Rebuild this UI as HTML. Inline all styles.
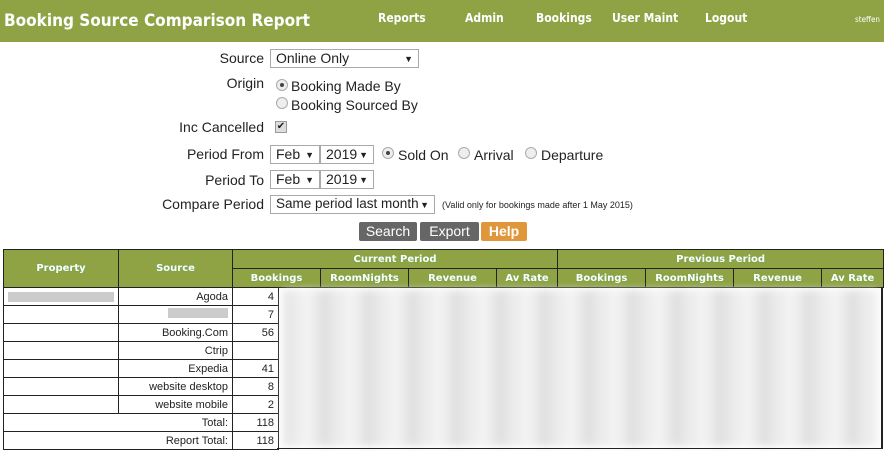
<!DOCTYPE html>
<html><head><style>
*{margin:0;padding:0;box-sizing:border-box}
body{width:884px;height:451px;background:#fff;font-family:"Liberation Sans",Arial,sans-serif;position:relative;overflow:hidden;color:#222}
.hdr{position:absolute;left:0;top:0;width:884px;height:42px;background:#8fa345}
.hdr div{position:absolute;color:#fff;font-family:"DejaVu Sans Condensed","DejaVu Sans",sans-serif;font-weight:bold}
.lbl{position:absolute;right:620px;font-size:14px;white-space:nowrap}
.a{position:absolute;font-size:14px;white-space:nowrap}
.sel{position:absolute;border:1px solid #a9a9a9;background:#fff;font-size:14px;padding-left:5px;line-height:16px;height:19px;white-space:nowrap}
.sel:after{content:"▼";position:absolute;right:5px;top:1px;font-size:9px}
.rad{position:absolute;width:12px;height:12px;border-radius:50%;border:1px solid #aaa;background:#eee}
.rad.on:after{content:"";position:absolute;left:3px;top:3px;width:4px;height:4px;border-radius:50%;background:#444}
.btn{position:absolute;top:222px;height:19px;color:#fff;font-size:14px;text-align:center;line-height:19px;border-radius:2px}
table{position:absolute;border-collapse:collapse;font-size:11px;table-layout:fixed}
td,th{border:1px solid #222;height:18px;padding:0 4px}
th{background:#8fa345;color:#fff;font-family:"DejaVu Sans",sans-serif;font-size:10px;text-shadow:0 0 1px #4a6;height:19px}
td{text-align:right}
</style></head><body>
<div class="hdr">
<div style="left:4px;top:11px;font-size:17px">Booking Source Comparison Report</div>
<div style="left:378px;top:11px;font-size:12px">Reports</div>
<div style="left:465px;top:11px;font-size:12px">Admin</div>
<div style="left:536px;top:11px;font-size:12px">Bookings</div>
<div style="left:612px;top:11px;font-size:12px">User Maint</div>
<div style="left:705px;top:11px;font-size:12px">Logout</div>
<div style="left:855px;top:15px;font-size:8px;font-weight:normal">steffen</div>
</div>
<div class="lbl" style="top:50px">Source</div>
<div class="sel" style="left:270px;top:49px;width:149px">Online Only</div>
<div class="lbl" style="top:75px">Origin</div>
<div class="rad on" style="left:276px;top:79px"></div><div class="a" style="left:291px;top:78px">Booking Made By</div>
<div class="rad" style="left:276px;top:97px"></div><div class="a" style="left:291px;top:97px">Booking Sourced By</div>
<div class="lbl" style="top:119px">Inc Cancelled</div>
<div style="position:absolute;left:275px;top:121px;width:12px;height:12px;border:1px solid #999;background:#ddd;font-size:10px;line-height:10px;text-align:center">✔</div>
<div class="lbl" style="top:146px">Period From</div>
<div class="sel" style="left:270px;top:145px;width:50px">Feb</div>
<div class="sel" style="left:320px;top:145px;width:54px">2019</div>
<div class="rad on" style="left:382px;top:147px"></div><div class="a" style="left:398px;top:147px">Sold On</div>
<div class="rad" style="left:458px;top:147px"></div><div class="a" style="left:474px;top:147px">Arrival</div>
<div class="rad" style="left:525px;top:147px"></div><div class="a" style="left:541px;top:147px">Departure</div>
<div class="lbl" style="top:172px">Period To</div>
<div class="sel" style="left:270px;top:170px;width:50px">Feb</div>
<div class="sel" style="left:320px;top:170px;width:54px">2019</div>
<div class="lbl" style="top:196px">Compare Period</div>
<div class="sel" style="left:270px;top:195px;width:165px;font-size:13.5px">Same period last month</div>
<div class="a" style="left:442px;top:200px;font-size:9px">(Valid only for bookings made after 1 May 2015)</div>
<div class="btn" style="left:359px;width:58px;background:#666">Search</div>
<div class="btn" style="left:420px;width:59px;background:#666">Export</div>
<div class="btn" style="left:481px;width:46px;background:#e0963a;font-weight:bold">Help</div>
<table style="left:3px;top:249px;width:880px">
<colgroup><col style="width:115px"><col style="width:114px"><col style="width:88px"><col style="width:88px"><col style="width:88px"><col style="width:61px"><col style="width:88px"><col style="width:88px"><col style="width:88px"><col style="width:62px"></colgroup>
<tr><th rowspan="2">Property</th><th rowspan="2">Source</th><th colspan="4">Current Period</th><th colspan="4">Previous Period</th></tr>
<tr><th>Bookings</th><th>RoomNights</th><th>Revenue</th><th>Av Rate</th><th>Bookings</th><th>RoomNights</th><th>Revenue</th><th>Av Rate</th></tr>
</table>
<table style="left:3px;top:287px;width:275px">
<colgroup><col style="width:115px"><col style="width:114px"><col style="width:46px"></colgroup>
<tr><td style="text-align:left"><div style="width:106px;height:10px;background:#ccc"></div></td><td>Agoda</td><td>4</td></tr>
<tr><td></td><td><div style="display:inline-block;width:60px;height:10px;background:#ccc"></div></td><td>7</td></tr>
<tr><td></td><td>Booking.Com</td><td>56</td></tr>
<tr><td></td><td>Ctrip</td><td></td></tr>
<tr><td></td><td>Expedia</td><td>41</td></tr>
<tr><td></td><td>website desktop</td><td>8</td></tr>
<tr><td></td><td>website mobile</td><td>2</td></tr>
<tr><td colspan="2">Total:</td><td>118</td></tr>
<tr><td colspan="2">Report Total:</td><td>118</td></tr>
</table>
<div style="position:absolute;left:283px;top:290px;width:595px;height:156px;background:repeating-linear-gradient(90deg,#e4e4e4 0,#f4f4f4 25px,#dcdcdc 44px);filter:blur(4px)"></div>
<div style="position:absolute;left:881px;top:287px;width:2px;height:162px;background:#222"></div>
<div style="position:absolute;left:277px;top:448px;width:606px;height:1px;background:#222"></div>
</body></html>
